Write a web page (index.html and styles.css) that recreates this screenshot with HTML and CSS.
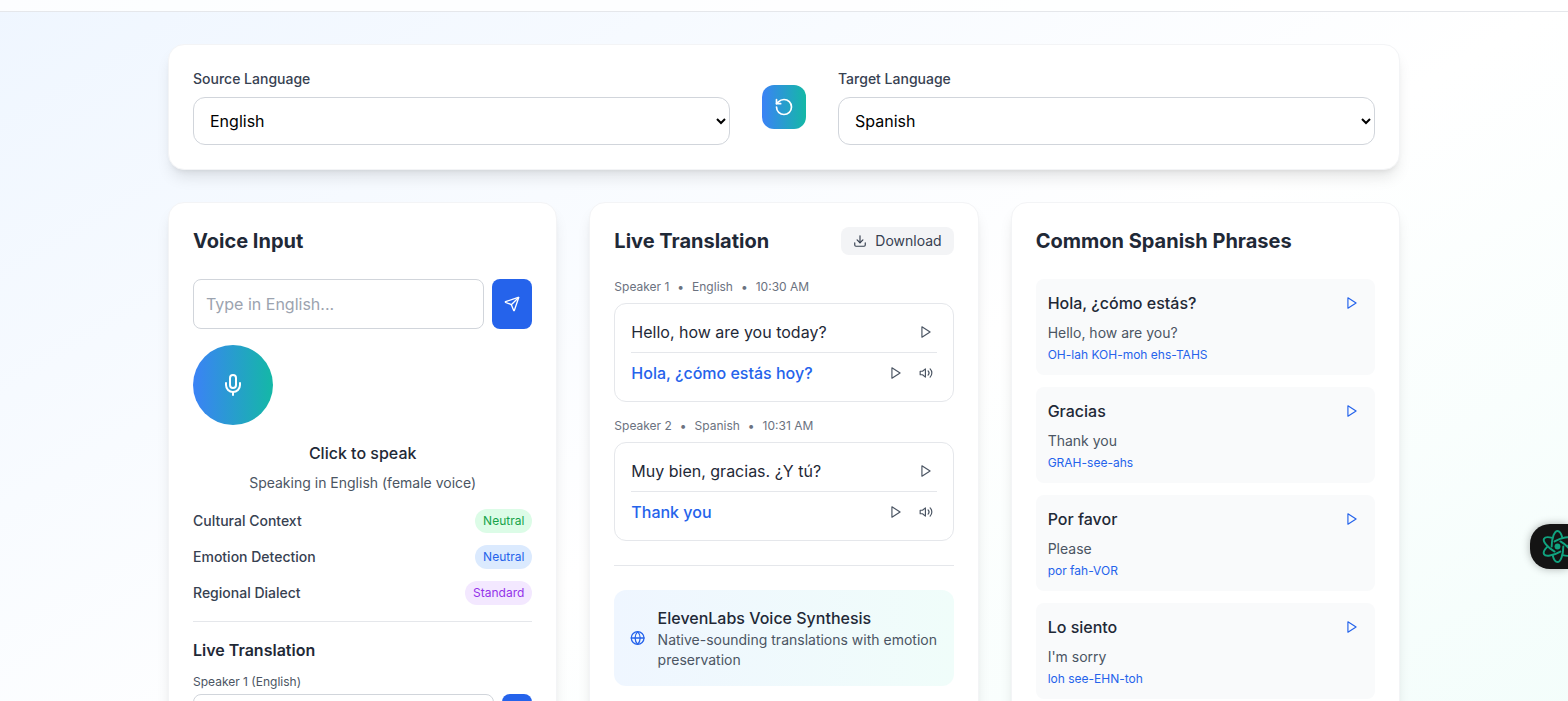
FILE: index.html
```
<!DOCTYPE html>
<html lang="en">
<head>
    <meta charset="UTF-8">
    <meta name="viewport" content="width=device-width, initial-scale=1.0">
    <title>Voice Translator</title>
    <link rel="stylesheet" href="styles.css">
</head>
<body>
    <!-- Shared icons -->
    <svg class="sprite" aria-hidden="true">
        <symbol id="play" viewBox="0 0 24 24"><path d="M5 3l14 9-14 9z"/></symbol>
        <symbol id="volume" viewBox="0 0 24 24">
            <path d="M11 5L6 9H2v6h4l5 4z"/>
            <path d="M15.54 8.46a5 5 0 0 1 0 7.07"/>
            <path d="M19.07 4.93a10 10 0 0 1 0 14.14"/>
        </symbol>
        <symbol id="send" viewBox="0 0 24 24">
            <path d="M14.536 21.686a.5.5 0 0 0 .937-.024l6.5-19a.496.496 0 0 0-.635-.635l-19 6.5a.5.5 0 0 0-.024.937l7.93 3.18a2 2 0 0 1 1.112 1.11z"/>
            <path d="M21.854 2.147l-10.94 10.939"/>
        </symbol>
    </svg>

    <header class="header"></header>

    <main class="container">
        <section class="card language-bar">
            <div class="language">
                <label for="source">Source Language</label>
                <select id="source">
                    <option>English</option>
                    <option>Spanish</option>
                </select>
            </div>
            <button class="swap-btn" aria-label="Swap languages">
                <svg class="icon icon-lg" viewBox="0 0 24 24">
                    <path d="M3 12a9 9 0 1 0 9-9 9.75 9.75 0 0 0-6.74 2.74L3 8"/>
                    <path d="M3 3v5h5"/>
                </svg>
            </button>
            <div class="language">
                <label for="target">Target Language</label>
                <select id="target">
                    <option>Spanish</option>
                    <option>English</option>
                </select>
            </div>
        </section>

        <div class="columns">
            <!-- Voice input -->
            <section class="card">
                <div class="card-header">
                    <h2>Voice Input</h2>
                </div>
                <form class="input-row">
                    <input type="text" class="text-input" placeholder="Type in English..." aria-label="Type in English">
                    <button type="button" class="send-btn" aria-label="Send">
                        <svg class="icon icon-md"><use href="#send"/></svg>
                    </button>
                </form>
                <button class="mic-btn" aria-label="Start speaking">
                    <svg class="icon icon-xl" viewBox="0 0 24 24">
                        <rect x="9" y="2" width="6" height="13" rx="3"/>
                        <path d="M19 10v2a7 7 0 0 1-14 0v-2"/>
                        <path d="M12 19v3"/>
                    </svg>
                </button>
                <div class="speak-hint">
                    <p class="speak-title">Click to speak</p>
                    <p class="speak-voice">Speaking in English (female voice)</p>
                </div>
                <div class="settings">
                    <div class="setting"><span>Cultural Context</span><span class="pill green">Neutral</span></div>
                    <div class="setting"><span>Emotion Detection</span><span class="pill blue">Neutral</span></div>
                    <div class="setting"><span>Regional Dialect</span><span class="pill purple">Standard</span></div>
                </div>
                <div class="live">
                    <h3>Live Translation</h3>
                    <label for="speaker1">Speaker 1 (English)</label>
                    <div class="input-row">
                        <input type="text" id="speaker1" class="text-input small">
                        <button class="send-btn small" aria-label="Send as speaker 1">
                            <svg class="icon"><use href="#send"/></svg>
                        </button>
                    </div>
                </div>
            </section>

            <!-- Conversation -->
            <section class="card">
                <div class="card-header">
                    <h2>Live Translation</h2>
                    <button class="download-btn">
                        <svg class="icon" viewBox="0 0 24 24">
                            <path d="M21 15v4a2 2 0 0 1-2 2H5a2 2 0 0 1-2-2v-4"/>
                            <path d="M7 10l5 5 5-5"/>
                            <path d="M12 15V3"/>
                        </svg>
                        Download
                    </button>
                </div>
                <div class="messages">
                    <article class="message">
                        <div class="meta"><span>Speaker 1</span><span>•</span><span>English</span><span>•</span><span>10:30 AM</span></div>
                        <div class="bubble">
                            <div class="line original">
                                <p>Hello, how are you today?</p>
                                <button class="icon-btn" aria-label="Play original"><svg class="icon"><use href="#play"/></svg></button>
                            </div>
                            <div class="line translated">
                                <p>Hola, ¿cómo estás hoy?</p>
                                <button class="icon-btn" aria-label="Play translation"><svg class="icon"><use href="#play"/></svg></button>
                                <button class="icon-btn" aria-label="Speak translation"><svg class="icon"><use href="#volume"/></svg></button>
                            </div>
                        </div>
                    </article>
                    <article class="message">
                        <div class="meta"><span>Speaker 2</span><span>•</span><span>Spanish</span><span>•</span><span>10:31 AM</span></div>
                        <div class="bubble">
                            <div class="line original">
                                <p>Muy bien, gracias. ¿Y tú?</p>
                                <button class="icon-btn" aria-label="Play original"><svg class="icon"><use href="#play"/></svg></button>
                            </div>
                            <div class="line translated">
                                <p>Thank you</p>
                                <button class="icon-btn" aria-label="Play translation"><svg class="icon"><use href="#play"/></svg></button>
                                <button class="icon-btn" aria-label="Speak translation"><svg class="icon"><use href="#volume"/></svg></button>
                            </div>
                        </div>
                    </article>
                </div>
                <div class="synthesis">
                    <div class="synthesis-box">
                        <svg class="icon icon-lg" viewBox="0 0 24 24">
                            <circle cx="12" cy="12" r="10"/>
                            <path d="M12 2a14.5 14.5 0 0 0 0 20 14.5 14.5 0 0 0 0-20"/>
                            <path d="M2 12h20"/>
                        </svg>
                        <div>
                            <h3>ElevenLabs Voice Synthesis</h3>
                            <p>Native-sounding translations with emotion preservation</p>
                        </div>
                    </div>
                </div>
            </section>

            <!-- Phrases -->
            <section class="card">
                <div class="card-header">
                    <h2>Common Spanish Phrases</h2>
                </div>
                <div class="phrases">
                    <article class="phrase">
                        <div class="phrase-top">
                            <h3>Hola, ¿cómo estás?</h3>
                            <button class="icon-btn" aria-label="Play phrase"><svg class="icon"><use href="#play"/></svg></button>
                        </div>
                        <p class="meaning">Hello, how are you?</p>
                        <p class="sound">OH-lah KOH-moh ehs-TAHS</p>
                    </article>
                    <article class="phrase">
                        <div class="phrase-top">
                            <h3>Gracias</h3>
                            <button class="icon-btn" aria-label="Play phrase"><svg class="icon"><use href="#play"/></svg></button>
                        </div>
                        <p class="meaning">Thank you</p>
                        <p class="sound">GRAH-see-ahs</p>
                    </article>
                    <article class="phrase">
                        <div class="phrase-top">
                            <h3>Por favor</h3>
                            <button class="icon-btn" aria-label="Play phrase"><svg class="icon"><use href="#play"/></svg></button>
                        </div>
                        <p class="meaning">Please</p>
                        <p class="sound">por fah-VOR</p>
                    </article>
                    <article class="phrase">
                        <div class="phrase-top">
                            <h3>Lo siento</h3>
                            <button class="icon-btn" aria-label="Play phrase"><svg class="icon"><use href="#play"/></svg></button>
                        </div>
                        <p class="meaning">I'm sorry</p>
                        <p class="sound">loh see-EHN-toh</p>
                    </article>
                </div>
            </section>
        </div>
    </main>

    <button class="assistant" aria-label="Open assistant">
        <svg viewBox="0 0 36 36">
            <path d="M12 18C12 9 15 2 18 2c2 0 4 3 5 7"/>
            <path d="M12 18C12 9 15 2 18 2c2 0 4 3 5 7" transform="rotate(60 18 18)"/>
            <path d="M12 18C12 9 15 2 18 2c2 0 4 3 5 7" transform="rotate(120 18 18)"/>
            <path d="M12 18C12 9 15 2 18 2c2 0 4 3 5 7" transform="rotate(180 18 18)"/>
            <path d="M12 18C12 9 15 2 18 2c2 0 4 3 5 7" transform="rotate(240 18 18)"/>
            <path d="M12 18C12 9 15 2 18 2c2 0 4 3 5 7" transform="rotate(300 18 18)"/>
            <circle cx="18" cy="18" r="3"/>
        </svg>
    </button>
</body>
</html>
```

FILE: styles.css
```
* {
    box-sizing: border-box;
}

body {
    margin: 0;
    min-height: 130vh;
    font-family: Inter, sans-serif;
    font-size: 16px;
    line-height: 24px;
    color: #1f2937;
    background: linear-gradient(to bottom right, #eff6ff, #ffffff, #f0fdfa);
    overflow: hidden;
}

h2, h3, p {
    margin: 0;
}

button, input, select {
    font: inherit;
    margin: 0;
}

button {
    border: none;
    padding: 0;
    cursor: pointer;
    background: none;
}

.sprite {
    display: none;
}

.icon {
    width: 14px;
    height: 14px;
    fill: none;
    stroke: currentColor;
    stroke-width: 2;
    stroke-linecap: round;
    stroke-linejoin: round;
}

.icon-md { width: 16px; height: 16px; }
.icon-lg { width: 20px; height: 20px; }
.icon-xl { width: 24px; height: 24px; }

.header {
    height: 12px;
    background: rgba(255, 255, 255, 0.8);
    border-bottom: 1px solid #e5e7eb;
}

.container {
    max-width: 1280px;
    margin: 0 auto;
    padding: 32px 24px;
}

.card {
    background: white;
    border: 1px solid #f3f4f6;
    border-radius: 16px;
    padding: 24px;
    box-shadow: 0 10px 15px -3px rgba(0,0,0,0.1), 0 4px 6px -4px rgba(0,0,0,0.1);
}

.card-header {
    display: flex;
    align-items: center;
    justify-content: space-between;
    margin-bottom: 24px;
}

.card-header h2 {
    font-size: 20px;
    line-height: 28px;
    font-weight: 700;
}

/* Language selection */
.language-bar {
    display: flex;
    align-items: center;
    gap: 32px;
    margin-bottom: 32px;
}

.language {
    flex: 1;
}

.language label {
    display: block;
    margin-bottom: 8px;
    font-size: 14px;
    line-height: 20px;
    font-weight: 500;
    color: #374151;
}

.language select {
    display: block;
    width: 100%;
    height: 48px;
    padding: 0 12px;
    border: 1px solid #d1d5db;
    border-radius: 12px;
    background: white;
    color: black;
}

.swap-btn {
    display: flex;
    padding: 12px;
    border-radius: 12px;
    color: white;
    background: linear-gradient(to right, #3b82f6, #14b8a6);
}

.columns {
    display: grid;
    grid-template-columns: repeat(3, minmax(0, 1fr));
    gap: 32px;
}

/* Voice input */
.input-row {
    display: flex;
    gap: 8px;
}

.text-input {
    flex: 1;
    min-width: 0;
    padding: 12px;
    border: 1px solid #d1d5db;
    border-radius: 8px;
    background: white;
}

.text-input::placeholder {
    color: #9ca3af;
}

.text-input.small {
    padding: 8px;
    font-size: 14px;
    line-height: 20px;
}

.send-btn {
    display: flex;
    align-items: center;
    padding: 12px;
    border-radius: 8px;
    color: white;
    background: #2563eb;
}

.send-btn.small {
    padding: 8px;
}

.mic-btn {
    display: flex;
    align-items: center;
    justify-content: center;
    width: 80px;
    height: 80px;
    margin: 16px 0;
    border-radius: 50%;
    color: white;
    background: linear-gradient(to right, #3b82f6, #14b8a6);
}

.speak-hint {
    text-align: center;
    margin-bottom: 16px;
}

.speak-title {
    font-weight: 500;
    margin-bottom: 8px;
}

.speak-voice {
    font-size: 14px;
    line-height: 20px;
    color: #4b5563;
}

.settings {
    display: flex;
    flex-direction: column;
    gap: 12px;
}

.setting {
    display: flex;
    align-items: center;
    justify-content: space-between;
    font-size: 14px;
    font-weight: 500;
    color: #374151;
}

.pill {
    padding: 4px 8px;
    border-radius: 12px;
    font-size: 12px;
    line-height: 16px;
    font-weight: 400;
}

.green { background: #dcfce7; color: #16a34a; }
.blue { background: #dbeafe; color: #2563eb; }
.purple { background: #f3e8ff; color: #9333ea; }

.live {
    margin-top: 16px;
    padding-top: 16px;
    border-top: 1px solid #e5e7eb;
}

.live h3 {
    font-size: 16px;
    font-weight: 600;
    margin-bottom: 12px;
}

.live label {
    display: block;
    margin-bottom: 4px;
    font-size: 12px;
    line-height: 16px;
    color: #4b5563;
}

/* Conversation */
.download-btn {
    display: flex;
    align-items: center;
    gap: 8px;
    padding: 4px 12px;
    border-radius: 8px;
    font-size: 14px;
    line-height: 20px;
    color: #374151;
    background: #f3f4f6;
}

.messages {
    display: flex;
    flex-direction: column;
    gap: 16px;
}

.meta {
    display: flex;
    gap: 8px;
    margin-bottom: 8px;
    font-size: 12px;
    line-height: 16px;
    color: #6b7280;
}

.bubble {
    padding: 16px;
    border: 1px solid #e5e7eb;
    border-radius: 12px;
}

.line {
    display: flex;
    align-items: center;
    gap: 8px;
}

.line p {
    flex: 1;
}

.original {
    padding-bottom: 8px;
    border-bottom: 1px solid #e5e7eb;
}

.translated {
    padding-top: 8px;
}

.translated p {
    font-weight: 500;
    color: #2563eb;
}

.icon-btn {
    display: flex;
    padding: 4px;
    color: #4b5563;
}

.synthesis {
    margin-top: 24px;
    padding-top: 24px;
    border-top: 1px solid #e5e7eb;
}

.synthesis-box {
    display: flex;
    align-items: center;
    gap: 12px;
    padding: 16px;
    border-radius: 12px;
    color: #2563eb;
    background: linear-gradient(to right, #eff6ff, #f0fdfa);
}

.synthesis-box h3 {
    font-size: 16px;
    font-weight: 500;
    color: #1f2937;
}

.synthesis-box p {
    font-size: 14px;
    line-height: 20px;
    color: #4b5563;
}

/* Phrases */
.phrases {
    display: flex;
    flex-direction: column;
    gap: 12px;
}

.phrase {
    padding: 12px;
    border-radius: 8px;
    background: #f9fafb;
}

.phrase-top {
    display: flex;
    align-items: center;
    justify-content: space-between;
    margin-bottom: 8px;
}

.phrase-top h3 {
    font-size: 16px;
    font-weight: 500;
}

.phrase .icon-btn {
    color: #2563eb;
}

.meaning {
    margin-bottom: 4px;
    font-size: 14px;
    line-height: 20px;
    color: #4b5563;
}

.sound {
    font-size: 12px;
    line-height: 16px;
    color: #2563eb;
}

/* Floating assistant tab on the right edge */
.assistant {
    position: fixed;
    right: 0;
    bottom: 132px;
    width: 38px;
    height: 45px;
    padding: 5px 0 5px 10px;
    overflow: hidden;
    border-radius: 20px 0 0 20px;
    background: #141414;
    box-shadow: 0 0 8px rgba(0,0,0,0.3);
}

.assistant svg {
    display: block;
    width: 35px;
    height: 35px;
    fill: none;
    stroke: #10a37f;
    stroke-width: 2;
    stroke-linecap: round;
}

.assistant circle {
    fill: #10a37f;
    stroke: none;
}
```
